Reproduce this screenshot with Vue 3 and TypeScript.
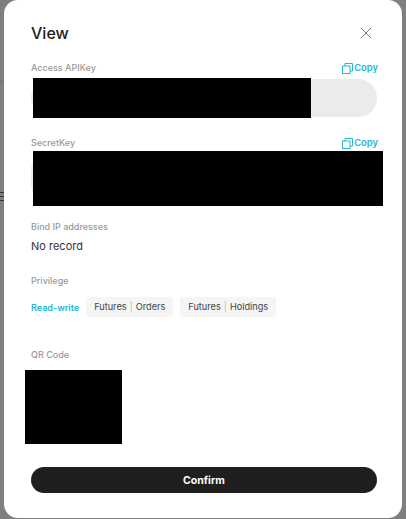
<script setup lang="ts">
const tags: string[][] = [
  ['Futures', 'Orders'],
  ['Futures', 'Holdings'],
]
</script>

<template>
  <div class="backdrop">
    <span class="behind-line"></span>
    <span class="behind-glyph"></span>
    <div class="modal">
      <header class="head">
        <h2 class="title">View</h2>
        <svg class="close" width="12" height="12" viewBox="0 0 12 12" aria-label="Close">
          <path d="M.8.8l10.4 10.4M11.2.8L.8 11.2" stroke="#7a7a7a" stroke-width="1" fill="none" />
        </svg>
      </header>

      <section class="key key-a">
        <div class="label-row">
          <span class="label">Access APIKey</span>
          <span class="copy">
            <svg width="11" height="11" viewBox="0 0 11 11" fill="none" stroke="#22b8d6" stroke-width="1">
              <rect x=".5" y="3" width="7.5" height="7.5" />
              <path d="M3 3V.5h7.5V8H8" />
            </svg>
            Copy
          </span>
        </div>
        <div class="input">
          <div class="redact redact-a"></div>
        </div>
      </section>

      <section class="key key-b">
        <div class="label-row">
          <span class="label">SecretKey</span>
          <span class="copy">
            <svg width="11" height="11" viewBox="0 0 11 11" fill="none" stroke="#22b8d6" stroke-width="1">
              <rect x=".5" y="3" width="7.5" height="7.5" />
              <path d="M3 3V.5h7.5V8H8" />
            </svg>
            Copy
          </span>
        </div>
        <div class="input input-b">
          <div class="redact redact-b"></div>
        </div>
      </section>

      <section class="bind">
        <div class="label">Bind IP addresses</div>
        <div class="value">No record</div>
      </section>

      <section class="priv">
        <div class="label">Privilege</div>
        <div class="tags">
          <span class="rw">Read-write</span>
          <span v-for="t in tags" :key="t[1]" class="tag">{{ t[0] }}<i class="sep">|</i>{{ t[1] }}</span>
        </div>
      </section>

      <section class="qr">
        <div class="label">QR Code</div>
        <div class="qr-box"></div>
      </section>

      <button class="confirm" type="button">Confirm</button>
    </div>
  </div>
</template>

<style>
html, body { margin: 0; background: #7f7f7f; }
</style>

<style scoped>
.backdrop {
  position: relative;
  width: 406px;
  height: 519px;
  overflow: hidden;
  background: #7f7f7f;
  font-family: Inter, "Liberation Sans", sans-serif;
}
.behind-line {
  position: absolute;
  left: 0;
  top: 81px;
  width: 4px;
  height: 1px;
  background: #737373;
}
.behind-glyph {
  position: absolute;
  left: 0;
  top: 192px;
  width: 4px;
  height: 1px;
  background: #333;
  box-shadow: 0 4px 0 #333, 0 8px 0 #333;
}
.modal {
  box-sizing: border-box;
  position: relative;
  width: 398px;
  height: 518px;
  margin-left: 4px;
  padding: 0 25px 0 27px;
  background: #fff;
  border-radius: 14px;
}
.head {
  display: flex;
  justify-content: space-between;
  align-items: center;
  height: 22px;
  padding: 22px 5px 0 0;
}
.title {
  margin: 0;
  font-size: 16px;
  line-height: 22px;
  font-weight: 500;
  color: #222;
}
.label-row {
  display: flex;
  justify-content: space-between;
  align-items: center;
  height: 14px;
}
.label {
  font-size: 9px;
  line-height: 14px;
  font-weight: 500;
  color: #9a9a9a;
}
.copy {
  display: inline-flex;
  align-items: center;
  gap: 1px;
  margin-right: -1px;
  font-size: 9.4px;
  line-height: 14px;
  font-weight: 600;
  color: #22b8d6;
}
.key-a { margin-top: 17px; }
.key-b { margin-top: 19px; }
.input {
  position: relative;
  height: 38px;
  margin-top: 4px;
  background: #ebebeb;
  border-radius: 19px;
}
.input-b { height: 52px; margin-top: 1px; }
.redact {
  position: absolute;
  background: #000;
}
.redact-a { left: 2px; top: -1px; width: 278px; height: 40px; }
.redact-b { left: 2px; top: 0; width: 350px; height: 55px; }
.bind { margin-top: 17px; }
.value {
  margin-top: 5px;
  font-size: 11px;
  line-height: 14px;
  color: #333;
}
.priv { margin-top: 21px; }
.tags {
  display: flex;
  align-items: center;
  gap: 7px;
  margin-top: 9px;
}
.rw {
  font-size: 9px;
  font-weight: 600;
  color: #22b8d6;
}
.tag {
  padding: 0 8px;
  height: 20px;
  line-height: 20px;
  font-size: 9.2px;
  color: #444;
  background: #f5f5f5;
  border-radius: 3px;
}
.sep {
  font-style: normal;
  color: #bbb;
  margin: 0 3px;
}
.qr { margin-top: 31px; }
.qr-box {
  width: 97px;
  height: 74px;
  margin: 8px 0 0 -6px;
  background: #000;
}
.confirm {
  display: block;
  width: 346px;
  height: 26px;
  margin-top: 23px;
  padding: 0;
  border: 0;
  border-radius: 13px;
  background: #1f1f1f;
  color: #fff;
  font-family: inherit;
  font-size: 10.5px;
  font-weight: 700;
}
</style>
